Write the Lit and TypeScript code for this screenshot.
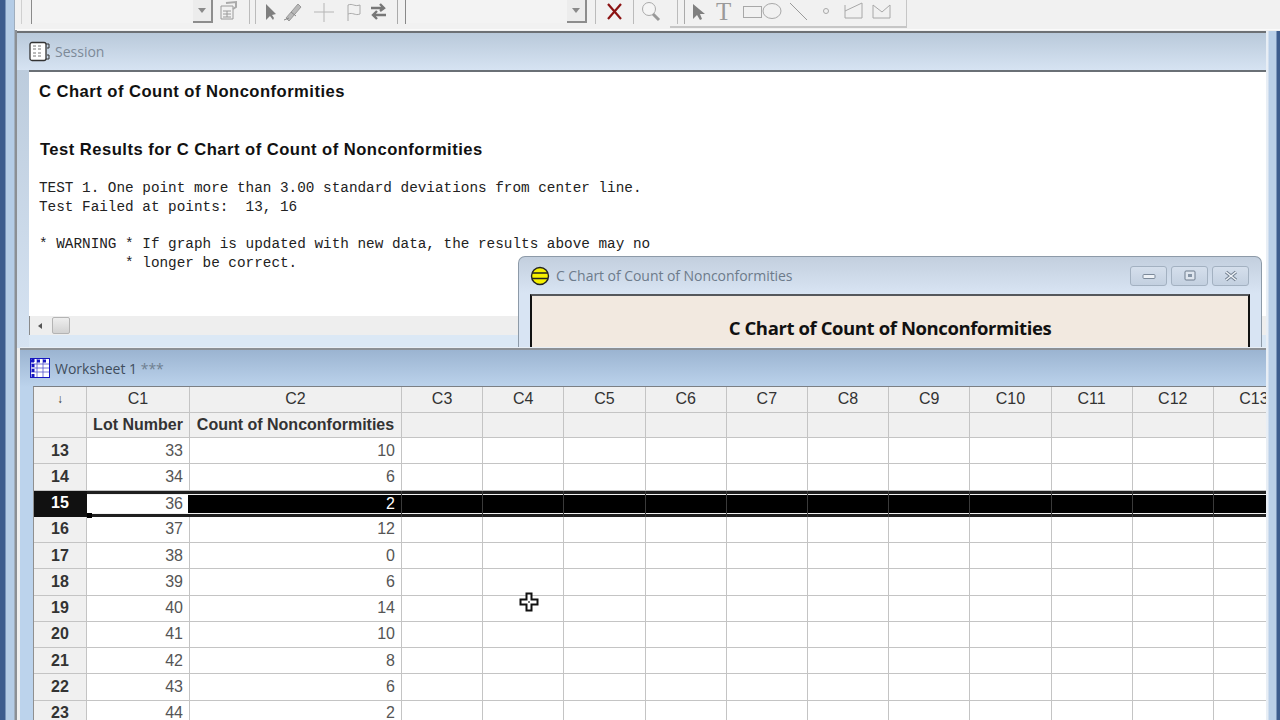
import { LitElement, html, css, svg, nothing } from "lit";
import { customElement } from "lit/decorators.js";

const ROWS: [number, number, number][] = [
  [13, 33, 10],
  [14, 34, 6],
  [15, 36, 2],
  [16, 37, 12],
  [17, 38, 0],
  [18, 39, 6],
  [19, 40, 14],
  [20, 41, 10],
  [21, 42, 8],
  [22, 43, 6],
  [23, 44, 2],
];
const EMPTY_COLS = ["C3", "C4", "C5", "C6", "C7", "C8", "C9", "C10", "C11", "C12", "C13"];
const SELECTED = 15;

const icon = (w: number, body: unknown) =>
  html`<svg class="ico" width=${w} height="24" viewBox="0 0 ${w} 24">${body}</svg>`;

const dropdown = html`<span class="drop"><i></i></span>`;

@customElement("app-root")
export class AppRoot extends LitElement {
  static styles = css`
    :host {
      display: block;
      width: 1280px;
      height: 720px;
      overflow: hidden;
      position: relative;
      font-family: "Liberation Sans", Arial, sans-serif;
      background: #f0f0f0;
    }
    .shell {
      display: flex;
      height: 720px;
    }
    .edge-left {
      width: 17px;
      flex: none;
      background: linear-gradient(90deg, #3c5c8e 0 5px, #b4cce6 6px 14px, #8b8f94 15px 17px);
    }
    .edge-right {
      width: 14px;
      flex: none;
      background: linear-gradient(90deg, #e8eef5 0 2px, #b9cfe8 3px 10px, #3c5c8e 11px);
      margin-top: 31px;
    }
    .main {
      flex: 1;
      min-width: 0;
      display: flex;
      flex-direction: column;
    }
    .top {
      position: absolute;
      left: 15px;
      top: 0;
      right: 0;
      height: 30px;
      background: #f1f1f1;
      display: flex;
      align-items: flex-start;
      box-shadow: inset 0 -1px 0 #fafafa;
    }
    .spacer {
      height: 31px;
      flex: none;
    }
    .top .ico {
      display: block;
      flex: none;
    }
    .sep {
      width: 1px;
      height: 24px;
      background: #9d9d9d;
      flex: none;
    }
    .combo {
      display: flex;
      justify-content: flex-end;
      height: 23px;
      flex: none;
      background: #f3f3f3;
    }
    .drop {
      width: 20px;
      height: 23px;
      background: #ececec;
      border-right: 2px solid #8d8d8d;
      border-bottom: 2px solid #8d8d8d;
      box-sizing: border-box;
      display: flex;
      align-items: center;
      justify-content: center;
    }
    .drop i {
      border: 4px solid transparent;
      border-top: 5px solid #8a8a8a;
      border-bottom: 0;
    }
    .shapes {
      display: flex;
      flex: none;
      height: 28px;
      box-sizing: border-box;
      width: 237px;
      border-right: 1px solid #c6c6c6;
      border-bottom: 2px solid #c6c6c6;
    }
    .session {
      height: 317px;
      flex: none;
      display: flex;
      flex-direction: column;
      border-top: 2px solid #6d7074;
      background: #dbe8f5;
      padding-left: 12px;
      box-sizing: border-box;
      position: relative;
    }
    .session::before,
    .sheet::before {
      content: "";
      position: absolute;
      left: 0;
      top: 0;
      bottom: 0;
      width: 12px;
    }
    .session::before {
      background: linear-gradient(180deg, #b9c9da, #d6e3f2);
    }
    .sheet::before {
      background: linear-gradient(180deg, #a2b9d4, #bcd3ec 10%, #bcd3ec);
      width: 13px;
    }
    .title-bar {
      display: flex;
      align-items: center;
      gap: 5px;
      position: relative;
      margin-left: -12px;
      padding-left: 12px;
      font-family: "Open Sans", sans-serif;
      font-size: 14px;
    }
    .session .title-bar {
      height: 37px;
      flex: none;
      background: linear-gradient(180deg, #b9c9da, #d6e3f2);
      color: #7d8a98;
    }
    .session-body {
      position: relative;
      flex: none;
      height: 247px;
      box-sizing: border-box;
      background: #fff;
      border-top: 2px solid #6a7076;
      padding: 10px 10px 0;
      color: #111;
    }
    .h1,
    .h2 {
      font: bold 16.6px "Liberation Sans", sans-serif;
      line-height: 19px;
      letter-spacing: 0.47px;
      white-space: nowrap;
    }
    .h2 {
      margin: 39px 0 0 1px;
    }
    pre {
      font: 14.35px/19px "Liberation Mono", monospace;
      margin: 0;
      color: #222;
    }
    pre.a {
      margin-top: 20px;
    }
    pre.b {
      margin-top: 18px;
    }
    .hscroll {
      height: 19px;
      flex: none;
      background: #eeeeee;
      position: relative;
      display: flex;
      align-items: center;
      gap: 10px;
      padding-left: 8px;
      border-left: 1px solid #8a8a8a;
      margin-top: -1px;
    }
    .hscroll i {
      border: 3px solid transparent;
      border-right: 4px solid #555;
      border-left: 0;
    }
    .thumb {
      width: 18px;
      height: 17px;
      box-sizing: border-box;
      border: 1px solid #b4b4b4;
      border-radius: 2px;
      background: linear-gradient(180deg, #eee, #d2d2d2);
    }
    .chart-win {
      position: absolute;
      left: 518px;
      top: 256px;
      width: 744px;
      height: 92px;
      box-sizing: border-box;
      border: 1px solid #8d9aa8;
      border-bottom: 0;
      border-radius: 7px 7px 0 0;
      background: linear-gradient(180deg, #c3cfde, #d8e4f3 40%, #d8e4f3);
      padding: 0 11px;
      display: flex;
      flex-direction: column;
    }
    .chart-head {
      height: 37px;
      flex: none;
      display: flex;
      align-items: center;
      gap: 6px;
      padding-left: 0;
      color: #6d7b8b;
      font: 14px "Open Sans", sans-serif;
      margin-left: 0;
    }
    .chart-head .label {
      flex: 1;
      letter-spacing: -0.05px;
    }
    .wbtns {
      display: flex;
      gap: 4px;
      margin-right: 1px;
    }
    .wbtn {
      width: 37px;
      height: 20px;
      box-sizing: border-box;
      border: 1px solid #a3b1c1;
      border-radius: 3px;
      background: linear-gradient(180deg, #d5dfec, #c3d0e0);
      display: flex;
      align-items: center;
      justify-content: center;
    }
    .chart-plot {
      flex: 1;
      background: #f2e9e0;
      border: 2px solid #111;
      border-bottom: 0;
      border-top-color: #55585c;
      text-align: center;
      font: bold 18.5px "Open Sans", sans-serif;
      color: #111;
      padding-top: 20px;
      line-height: 24px;
      letter-spacing: -0.4px;
      margin-left: 0;
    }
    .sheet {
      flex: 1;
      min-height: 0;
      display: flex;
      flex-direction: column;
      position: relative;
      border-top: 2px solid #8c9095;
      box-shadow: 0 -1px 0 #e8eef5;
      padding-left: 13px;
      margin-left: 3px;
      z-index: 1;
      overflow: hidden;
    }
    .sheet .title-bar {
      height: 36px;
      flex: none;
      margin-left: -13px;
      padding-left: 10px;
      background: linear-gradient(180deg, #9bb4d1, #bbd2eb);
      color: #3f4d5c;
    }
    .sheet .title-bar span {
      margin-left: 0;
    }
    .sheet .title-bar em {
      font-style: normal;
      color: #6f7f90;
    }
    .grid {
      flex: 1;
      min-height: 0;
      overflow: hidden;
      border-top: 1px solid #7b7f84;
      border-left: 1px solid #909090;
      background: #fff;
      position: relative;
    }
    .row {
      display: grid;
      grid-template-columns: 53px 103px 212px repeat(11, 81.2px);
      height: 26.25px;
      width: 1300px;
    }
    .row.head {
      height: 25.5px;
    }
    .cell {
      box-sizing: border-box;
      border-right: 1px solid #c4c4c4;
      border-bottom: 1px solid #c4c4c4;
      padding-right: 6px;
      display: flex;
      align-items: center;
      justify-content: flex-end;
      font-size: 16px;
      color: #555;
      background: #fff;
      white-space: nowrap;
    }
    .hd {
      background: #f0f0f0;
      color: #333;
      justify-content: center;
      padding: 0;
    }
    .hd.b {
      font-weight: bold;
    }
    .row.sel .hd {
      background: #111;
      color: #fff;
      border-color: #111;
    }
    .row.sel .cell:not(.hd) {
      background: #000;
      color: #fff;
      border-right-color: #3a3a3a;
      border-bottom: 0;
      box-shadow: inset 0 3px 0 #1f1f1f, inset 0 4px 0 #f2f2f2, inset 0 -3px 0 #1f1f1f, inset 0 -4px 0 #f2f2f2;
    }
    .row.sel .cell.active {
      background: #fff;
      color: #555;
      border-right-color: #fff;
    }
    .row.sel .cell.active + .cell {
      margin-left: -2px;
    }
    .handle {
      position: absolute;
      left: 53px;
      top: 126px;
      width: 5px;
      height: 5px;
      background: #000;
    }
    .cursor {
      position: absolute;
      left: 519px;
      top: 592px;
      z-index: 3;
    }
  `;

  private renderToolbar() {
    return html`
      <div class="top">
        <div class="sep" style="margin-left:6px;background:#d0d0d0"></div>
        <div class="sep" style="margin-left:9px;background:#8a8a8a"></div>
        <div class="combo" style="width:181px">${dropdown}</div>
        ${icon(36, svg`
          <g fill="none" stroke="#9a9a9a">
            <path d="M8 6h12v13H8z" /><path d="M10 11h8M10 14h8M10 17h8M14 11v6" />
            <path d="M13 3l10-1v5l-3 2" stroke-width="2" stroke="#aaa" />
          </g>`)}
        <div class="sep" style="background:#bbb"></div>
        <div class="sep" style="margin-left:5px;background:#bbb"></div>
        ${icon(141, svg`
          <path d="M10 4v16l4-4 3 4 1-2-2-3 4-1z" fill="#7f7f7f" />
          <path d="M30 18l3 3 12-14-3-3z" fill="#b9b9b9" stroke="#999" />
          <path d="M28 20l5-2M35 12l5 4" stroke="#888" fill="none" />
          <path d="M68 3v19M58 12h20" stroke="#b5b5b5" fill="none" />
          <path d="M92 5v16M92 5c5-2 6 2 12 0v9c-5 2-7-2-12 0" stroke="#aaa" fill="none" />
          <path d="M115 8h13M124 4l4 4-4 3M130 15h-13M121 11l-4 4 4 4" stroke="#777" stroke-width="2.4" fill="none" />`)}
        <div class="sep" style="margin-left:0;background:#aaa"></div>
        <div class="sep" style="margin-left:7px;background:#888"></div>
        <div class="combo" style="width:181px">${dropdown}</div>
        <div class="sep" style="margin-left:8px;background:#bbb"></div>
        ${icon(37, svg`
          <path d="M12 4l13 15M25 4L12 19" stroke="#8c1313" stroke-width="2.2" fill="none" />`)}
        <div class="sep" style="background:#bbb"></div>
        ${icon(36, svg`
          <circle cx="15" cy="9" r="6.5" fill="#f5f5f5" stroke="#aaa" />
          <path d="M19 14l6 6" stroke="#999" stroke-width="3" />`)}
        <div class="shapes">
          <div class="sep" style="margin-left:7px;background:#bbb"></div>
          <div class="sep" style="margin-left:6px;background:#aaa"></div>
          ${icon(222, svg`
            <path d="M8 4v15l4-4 3 5 2-1-2-5h5z" fill="#808080" />
            <text x="31" y="20" font-family="Liberation Serif" font-size="25" fill="#9a9a9a">T</text>
            <rect x="58.500" y="6.500" width="18" height="11" fill="none" stroke="#a8a8a8" />
            <ellipse cx="87" cy="11" rx="9" ry="7.500" fill="none" stroke="#a8a8a8" />
            <path d="M105 3l17 17" stroke="#9a9a9a" fill="none" />
            <circle cx="141" cy="11" r="2.500" fill="none" stroke="#a8a8a8" />
            <path d="M160 5v13h17V3l-17 8" fill="none" stroke="#a8a8a8" />
            <path d="M188 5v13h17V5l-8 7z" fill="none" stroke="#a8a8a8" />`)}
        </div>
      </div>
    `;
  }

  private renderSession() {
    return html`
      <section class="session">
        <div class="title-bar">
          <svg width="21" height="21" viewBox="0 0 21 21">
            <rect x="1" y="1.500" width="16" height="18" rx="2" fill="#fff" stroke="#333" stroke-width="1.300" />
            <path d="M17 3h3v4h-2M18 14h2v4h-3" fill="none" stroke="#333" />
            <path d="M4 5h3M9 5h3M4 8h3M9 8h3M4 12h3M9 12h3M4 15h3M9 15h3" stroke="#777" />
          </svg>
          <span>Session</span>
        </div>
        <div class="session-body">
          <div class="h1">C Chart of Count of Nonconformities</div>
          <div class="h2">Test Results for C Chart of Count of Nonconformities</div>
          <pre class="a">TEST 1. One point more than 3.00 standard deviations from center line.
Test Failed at points:  13, 16</pre>
          <pre class="b">* WARNING * If graph is updated with new data, the results above may no
          * longer be correct.</pre>
        </div>
        <div class="hscroll"><i></i><div class="thumb"></div></div>
      </section>
    `;
  }

  private renderChartWindow() {
    return html`
      <div class="chart-win">
        <div class="chart-head">
          <svg width="20" height="20" viewBox="0 0 20 20">
            <circle cx="10" cy="10" r="8.500" fill="#f6f000" stroke="#222" stroke-width="1.400" />
            <path d="M2 7h16M2 12.500h16" stroke="#222" stroke-width="1.400" />
          </svg>
          <span class="label">C Chart of Count of Nonconformities</span>
          <div class="wbtns">
            <span class="wbtn">
              <svg width="14" height="8" viewBox="0 0 14 8"><rect x="1" y="2.500" width="12" height="4" rx="1" fill="#eef2f7" stroke="#7c8a9a" /></svg>
            </span>
            <span class="wbtn">
              <svg width="12" height="11" viewBox="0 0 12 11"><rect x="1" y="1" width="10" height="9" rx="1" fill="#dfe6ef" stroke="#6f7d8d" /><rect x="4" y="4" width="4" height="3" fill="#8695a6" /></svg>
            </span>
            <span class="wbtn">
              <svg width="14" height="12" viewBox="0 0 14 12"><path d="M2 2l10 8M12 2L2 10" stroke="#6f7d8d" stroke-width="3.400" /><path d="M2 2l10 8M12 2L2 10" stroke="#eef2f7" stroke-width="1.600" /></svg>
            </span>
          </div>
        </div>
        <div class="chart-plot">C Chart of Count of Nonconformities</div>
      </div>
    `;
  }

  private renderSheet() {
    return html`
      <section class="sheet">
        <div class="title-bar">
          <svg width="20" height="20" viewBox="0 0 20 20">
            <rect x="0.500" y="0.500" width="19" height="19" fill="#fff" stroke="#1616c0" />
            <path d="M7 1v18M13 1v18M1 6h18M1 10h18M1 14h18" stroke="#5555cc" stroke-width="0.800" />
            <path d="M1 3h18" stroke="#1616c0" stroke-width="3" stroke-dasharray="3 3" />
            <path d="M3 1v18" stroke="#1616c0" stroke-width="3" stroke-dasharray="3 2" />
          </svg>
          <span>Worksheet 1 <em>***</em></span>
        </div>
        <div class="grid">
          <div class="row head">
            <div class="cell hd b" style="font-size:12px">↓</div>
            <div class="cell hd">C1</div>
            <div class="cell hd">C2</div>
            ${EMPTY_COLS.map((c) => html`<div class="cell hd">${c}</div>`)}
          </div>
          <div class="row head">
            <div class="cell hd"></div>
            <div class="cell hd b">Lot Number</div>
            <div class="cell hd b">Count of Nonconformities</div>
            ${EMPTY_COLS.map(() => html`<div class="cell hd"></div>`)}
          </div>
          ${ROWS.map(([n, lot, count]) => {
            const sel = n === SELECTED;
            return html`
              <div class="row ${sel ? "sel" : ""}">
                <div class="cell hd b">${n}</div>
                <div class="cell ${sel ? "active" : ""}">${lot}</div>
                <div class="cell">${count}</div>
                ${EMPTY_COLS.map(() => html`<div class="cell"></div>`)}
              </div>
            `;
          })}
          <div class="handle"></div>
        </div>
      </section>
    `;
  }

  render() {
    return html`
      <div class="shell">
        <div class="edge-left"></div>
        <div class="main">
          <div class="spacer"></div>
          ${this.renderSession()}
          ${this.renderSheet()}
        </div>
        <div class="edge-right"></div>
      </div>
      ${this.renderToolbar()}
      ${this.renderChartWindow()}
      <svg class="cursor" width="20" height="20" viewBox="0 0 20 20">
        <path d="M7.500 1.500h5v6h6v5h-6v6h-5v-6h-6v-5h6z" fill="#fff" stroke="#111" stroke-width="2" />
        <rect x="9" y="9" width="2" height="2" fill="#777" />
      </svg>
      ${nothing}
    `;
  }
}
